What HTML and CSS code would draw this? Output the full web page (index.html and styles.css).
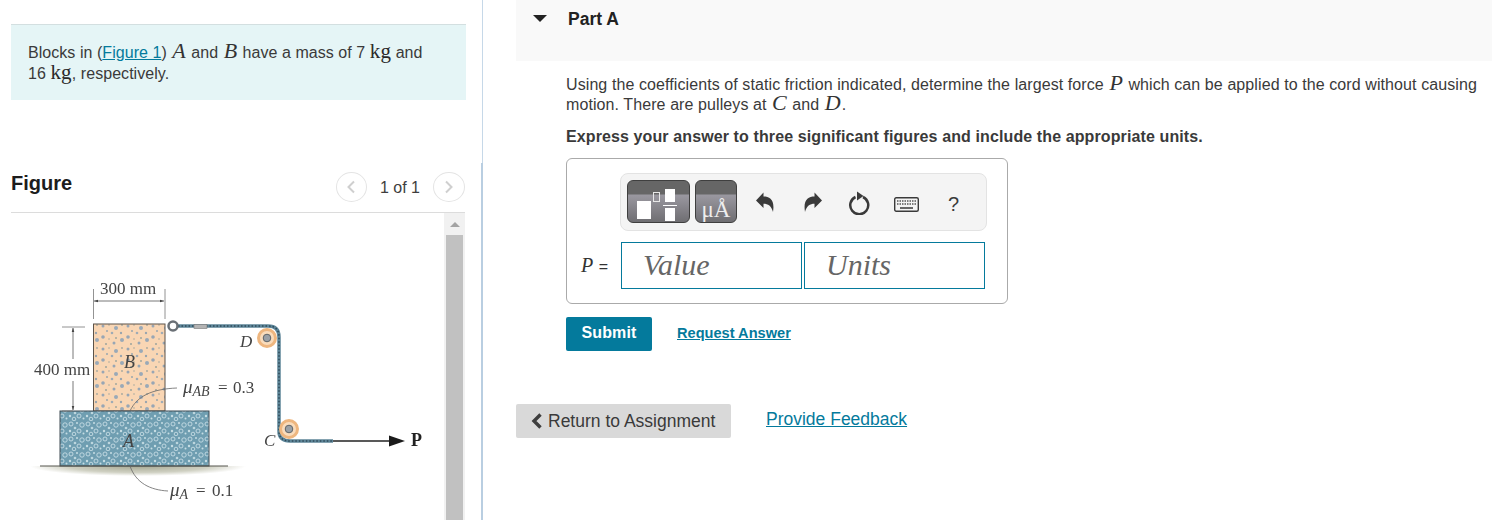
FILE: index.html
```html
<!DOCTYPE html>
<html lang="en">
<head>
<meta charset="utf-8">
<title>Part A</title>
<link rel="stylesheet" href="styles.css">
</head>
<body>
<div class="page">
  <aside class="left">
    <div class="intro">Blocks in (<a href="#">Figure 1</a>) <span class="mi">A</span> and <span class="mi">B</span> have a mass of 7 <span class="mu">kg</span> and<br>16 <span class="mu">kg</span>, respectively.</div>
    <div class="figure-head">
      <h2 class="figure-title">Figure</h2>
      <div class="pager">
        <span class="pager-btn"><svg width="10" height="14" viewBox="0 0 10 14"><path d="M8 1.5 2.500 7 8 12.500" fill="none" stroke="#cfcfcf" stroke-width="2"/></svg></span>
        <span class="pager-text">1 of 1</span>
        <span class="pager-btn"><svg width="10" height="14" viewBox="0 0 10 14"><path d="M2 1.5 7.500 7 2 12.500" fill="none" stroke="#cfcfcf" stroke-width="2"/></svg></span>
      </div>
    </div>
    <div class="figure-body">
      <svg class="diagram" width="433" height="308" viewBox="11 212 433 308">
        <defs>
          <pattern id="dotsB" width="25" height="23" patternUnits="userSpaceOnUse">
            <circle cx="3" cy="3" r="1.500" fill="#98a6b4"/>
            <circle cx="9" cy="2" r=".8" fill="#a3a79e"/>
            <circle cx="16" cy="5" r="2" fill="#9aa9b7"/>
            <circle cx="22" cy="2" r=".9" fill="#a3a79e"/>
            <circle cx="7" cy="8" r="1" fill="#9aa5ae"/>
            <circle cx="12" cy="10" r="1.300" fill="#9fabb5"/>
            <circle cx="21" cy="10" r="1.200" fill="#9aa5ae"/>
            <circle cx="3" cy="14" r="1.800" fill="#98a6b4"/>
            <circle cx="9" cy="16" r=".8" fill="#a3a79e"/>
            <circle cx="16" cy="15" r="1" fill="#a3a79e"/>
            <circle cx="22" cy="17" r="2" fill="#9aa9b7"/>
            <circle cx="6" cy="21" r="1.100" fill="#a3a79e"/>
            <circle cx="14" cy="20" r="1.500" fill="#98a6b4"/>
          </pattern>
          <pattern id="dotsA" width="17" height="15" patternUnits="userSpaceOnUse">
            <circle cx="3" cy="3" r="2" fill="none" stroke="#c6dde4" stroke-width=".9"/>
            <circle cx="9" cy="2" r="1" fill="#c6dde4"/>
            <circle cx="14" cy="4" r="2.200" fill="none" stroke="#c6dde4" stroke-width=".9"/>
            <circle cx="7" cy="7" r="1.300" fill="#bcd6de"/>
            <circle cx="2" cy="10" r="1.200" fill="#c6dde4"/>
            <circle cx="11" cy="10" r="2" fill="none" stroke="#c6dde4" stroke-width=".9"/>
            <circle cx="6" cy="13" r="1.800" fill="none" stroke="#c6dde4" stroke-width=".9"/>
            <circle cx="15.500" cy="12.500" r="1" fill="#c6dde4"/>
          </pattern>
          <radialGradient id="shade" cx=".5" cy="0" r=".5" gradientTransform="translate(0 0)">
            <stop offset="0" stop-color="#a6a892"/>
            <stop offset=".65" stop-color="#cfd0c2"/>
            <stop offset="1" stop-color="#fff"/>
          </radialGradient>
          <marker id="tip" markerWidth="6" markerHeight="6" refX="5.500" refY="2.500" orient="auto-start-reverse">
            <path d="M0 .8 6 2.500 0 4.200z" fill="#444"/>
          </marker>
        </defs>
        <rect x="30" y="465" width="216" height="20" fill="url(#shade)"/>
        <rect x="93.500" y="323" width="71.500" height="87" fill="#f9d6b4"/>
        <rect x="93.500" y="323" width="71.500" height="87" fill="url(#dotsB)" stroke="#5d5348" stroke-width="1"/>
        <rect x="60" y="410" width="149" height="55" fill="#6f9eb1"/>
        <rect x="60" y="410" width="149" height="55" fill="url(#dotsA)" stroke="#3f4b52" stroke-width="1"/>
        <path d="M40 465H228" stroke="#55554d" stroke-width="1"/>
        <path d="M93.500 288V318M165 288V318M62 326H85M62 410H73" stroke="#777" stroke-width=".8" fill="none"/>
        <path d="M94 300H164" stroke="#555" stroke-width=".8" marker-start="url(#tip)" marker-end="url(#tip)"/>
        <path d="M73 327V358" stroke="#555" stroke-width=".8" marker-start="url(#tip)"/>
        <path d="M73 380V409" stroke="#555" stroke-width=".8" marker-end="url(#tip)"/>
        <path d="M130 410C137 395 152 388 177 387M130 465C136 482 150 489 168 490" fill="none" stroke="#666" stroke-width=".8"/>
        <path d="M178 325H268Q279 325 279 336V430Q279 440 290 440H333" fill="none" stroke="#5d8598" stroke-width="3.500"/>
        <path d="M178 325H268Q279 325 279 336V430Q279 440 290 440H333" fill="none" stroke="#2f4a58" stroke-width="1.500" stroke-dasharray="1.500 2"/>
        <circle cx="173" cy="325" r="4.500" fill="#fff" stroke="#6a7076" stroke-width="2.500"/>
        <rect x="194" y="323.500" width="13" height="4" fill="#b4b4b4" stroke="#777" stroke-width=".6"/>
        <circle cx="267" cy="337" r="8.500" fill="#f9dcbc" stroke="#eeb67f" stroke-width="3"/>
        <circle cx="267" cy="337" r="3.800" fill="#9aa0a6" stroke="#5f6468" stroke-width="1"/>
        <circle cx="289" cy="428" r="8.500" fill="#f9dcbc" stroke="#eeb67f" stroke-width="3"/>
        <circle cx="289" cy="428" r="3.800" fill="#9aa0a6" stroke="#5f6468" stroke-width="1"/>
        <path d="M333 440H392" stroke="#222" stroke-width="1.600"/>
        <path d="M389 434.500 405 440 389 445.500z" fill="#1b1b1b"/>
        <g class="fig-text">
          <text x="100" y="293">300 mm</text>
          <text x="34" y="374">400 mm</text>
          <text class="it big" x="124" y="367">B</text>
          <text class="it big" x="123" y="446">A</text>
          <text class="it" x="240" y="346">D</text>
          <text class="it" x="264" y="445">C</text>
          <text x="183" y="392"><tspan class="it mug">μ</tspan><tspan class="it sub" dy="3">AB</tspan><tspan x="218" dy="-3">=</tspan><tspan x="233">0.3</tspan></text>
          <text x="170" y="495"><tspan class="it mug">μ</tspan><tspan class="it sub" dy="3">A</tspan><tspan x="196" dy="-3">=</tspan><tspan x="212">0.1</tspan></text>
          <text class="bold" x="411" y="445">P</text>
        </g>
      </svg>
      <div class="scrollbar">
        <div class="scroll-up"><span class="scroll-arrow"></span></div>
        <div class="scroll-thumb"></div>
      </div>
    </div>
  </aside>
  <main class="right">
    <div class="part-head">
      <span class="caret"></span>
      <h3 class="part-title">Part A</h3>
    </div>
    <div class="part-body">
      <p class="question">Using the coefficients of static friction indicated, determine the largest force <span class="mi">P</span> which can be applied to the cord without causing motion. There are pulleys at <span class="mi">C</span> and <span class="mi">D</span>.</p>
      <p class="instruction">Express your answer to three significant figures and include the appropriate units.</p>
      <div class="answer-box">
        <div class="toolbar">
          <div class="tpl tpl-wide">
            <span class="sq sq-base"></span>
            <span class="sq sq-exp"></span>
            <span class="frac"><span class="sq sq-num"></span><span class="frac-line"></span><span class="sq sq-num"></span></span>
          </div>
          <div class="tpl tpl-narrow"><span class="units-glyph">μÅ</span></div>
          <div class="tool-icons">
            <svg class="tool" width="18" height="20" viewBox="0 0 18 20"><path d="M0 8.500 7.500 .5V4.500C14 4.500 19 8 17 20 15.500 14 12 11.800 7.500 11.800V16z" fill="#3a3a3a"/></svg>
            <svg class="tool" width="18" height="20" viewBox="0 0 18 20"><path d="M18 8.500 10.500 .5V4.500C4 4.500-1 8 1 20 2.500 14 6 11.800 10.500 11.800V16z" fill="#3a3a3a"/></svg>
            <svg class="tool" width="24" height="24" viewBox="0 0 24 24"><path d="M8.500 6A9 9 0 1 0 16 6" fill="none" stroke="#3a3a3a" stroke-width="2.500"/><path d="M10 .5 16.500 5 10 9.500z" fill="#3a3a3a"/></svg>
            <svg class="tool" width="25" height="15" viewBox="0 0 25 15"><rect x=".7" y=".7" width="23.600" height="13.600" rx="1.500" fill="#f4f4f4" stroke="#3a3a3a" stroke-width="1.400"/><path d="M3 4H22M3 7H22" stroke="#555" stroke-width="1.500" stroke-dasharray="1.500 1"/><path d="M6 11H19" stroke="#444" stroke-width="1.600"/></svg>
            <span class="help">?</span>
          </div>
        </div>
        <div class="answer-row">
          <span class="var"><i>P</i> =</span>
          <div class="field">Value</div>
          <div class="field">Units</div>
        </div>
      </div>
      <div class="actions">
        <button class="submit" type="button">Submit</button>
        <a class="request" href="#">Request Answer</a>
      </div>
    </div>
    <div class="footer">
      <button class="return" type="button"><svg width="12" height="18" viewBox="0 0 12 18"><path d="M9.500 2.500 3 9l6.500 6.500" fill="none" stroke="#3e3e3e" stroke-width="3.400"/></svg>Return to Assignment</button>
      <a class="feedback" href="#">Provide Feedback</a>
    </div>
  </main>
</div>
</body>
</html>
```
FILE: styles.css
```css
* { box-sizing: border-box; }
html, body { margin: 0; padding: 0; background: #fff; }
body { font-family: "Liberation Sans", Arial, sans-serif; font-size: 16px; color: #3a3a3a; overflow: hidden; }
a { color: #047a9c; }
.page { display: flex; width: 1500px; height: 520px; overflow: hidden; }

.left {
  width: 483px; flex: none; padding: 24px 0 0 11px;
  background:
    linear-gradient(#c6d8e8, #c6d8e8) right top / 1px 163px no-repeat,
    linear-gradient(#b9cee1, #b9cee1) right bottom / 2px 357px no-repeat;
}
.intro { width: 455px; height: 76px; padding: 17px 17px 0; background: #e5f5f6; border-top: 1px solid #d3dfe0; line-height: 21px; letter-spacing: .05px; }
.mi { display: inline-block; padding: 0 1px; font-family: "Liberation Serif", serif; font-style: italic; font-size: 22px; line-height: 16px; letter-spacing: 0; color: #333; }
.mu { display: inline-block; font-family: "Liberation Serif", serif; font-size: 21px; line-height: 16px; letter-spacing: .2px; color: #2a2a2a; }

.figure-head { width: 454px; height: 41px; margin-top: 71px; display: flex; justify-content: space-between; align-items: flex-start; }
.figure-title { margin: 0; font-size: 20px; line-height: 22px; padding-top: 1px; color: #1c1c1c; }
.pager { display: flex; align-items: flex-start; padding-top: 1px; }
.pager-btn { width: 32px; height: 30px; border: 1px solid #e4e4e4; border-radius: 50%; display: flex; align-items: center; justify-content: center; }
.pager-btn:first-child { width: 31px; }
.pager-text { padding: 7px 13px 0 13px; line-height: 18px; color: #3e3e3e; }
.figure-body { width: 454px; height: 400px; border-top: 1px solid #dcdcdc; display: flex; overflow: hidden; }
.diagram { flex: none; display: block; filter: blur(.35px); }
.fig-text text { font-family: "Liberation Serif", serif; font-size: 17px; fill: #444; }
.fig-text .it { font-style: italic; }
.fig-text .big { font-size: 18px; }
.fig-text .mug { font-size: 19px; }
.fig-text .sub { font-size: 14px; }
.fig-text .bold { font-weight: bold; font-size: 18px; fill: #222; }
.scrollbar { width: 21px; background: #f1f1f1; padding: 0 2px; }
.scroll-up { height: 22px; display: flex; align-items: center; justify-content: center; }
.scroll-arrow { width: 0; height: 0; border-left: 5px solid transparent; border-right: 5px solid transparent; border-bottom: 5px solid #a3a3a3; }
.scroll-thumb { height: 400px; background: #c1c1c1; }

.right { flex: none; width: 976px; margin-left: 33px; }
.part-head { height: 61px; background: #f9f9f9; display: flex; align-items: flex-start; padding: 10px 0 0 17px; }
.caret { width: 0; height: 0; margin-top: 5px; border-left: 7px solid transparent; border-right: 7px solid transparent; border-top: 7px solid #222; }
.part-title { margin: 0 0 0 21px; font-size: 17.5px; line-height: 19px; color: #222; }
.part-body { padding-left: 50px; }
.question { margin: 14px 0 0; line-height: 20px; width: 926px; letter-spacing: .09px; }
.instruction { margin: 12px 0 0; font-weight: bold; line-height: 20px; letter-spacing: .11px; }
.answer-box { width: 442px; height: 146px; margin-top: 11px; border: 1px solid #aaa; border-radius: 6px; padding: 14px 20px 0 14px; }
.toolbar { width: 367px; height: 58px; margin-left: 39px; display: flex; align-items: flex-start; padding: 6px 0 0 6px; background: #f4f4f4; border: 1px solid #e3e3e3; border-radius: 8px; }
.tpl { height: 43px; border: 1px solid #3f3f3f; border-radius: 6px; background: linear-gradient(#666 0, #666 13px, #9a98a0 14px, #6f6e72 100%); display: flex; }
.tpl-wide { width: 63px; margin-right: 5px; align-items: flex-start; padding-left: 9px; }
.tpl-narrow { width: 42px; justify-content: center; align-items: flex-end; }
.sq { display: block; background: #fff; }
.sq-base { width: 14px; height: 18px; margin-top: 20px; }
.sq-exp { width: 7px; height: 10px; margin: 11px 0 0 2px; background: none; border: 1px solid #e8e8e8; }
.frac { margin: 8px 0 0 3px; width: 14px; display: flex; flex-direction: column; align-items: center; }
.sq-num { width: 10px; height: 13px; }
.frac-line { width: 14px; height: 1px; background: #fff; margin: 3px 0 2px; }
.units-glyph { font-family: "Liberation Serif", serif; font-size: 23px; line-height: 24px; color: #eee; }
.tool-icons { display: flex; align-items: center; height: 43px; padding-left: 19px; }
.tool { display: block; flex: none; }
.tool:nth-child(1) { margin-right: 30px; }
.tool:nth-child(2) { margin-right: 25px; }
.tool:nth-child(3) { margin-top: 2px; margin-right: 23px; }
.tool:nth-child(4) { margin-top: 5px; }
.help { margin-left: 29px; padding-top: 5px; font-size: 20px; color: #3a3a3a; }
.answer-row { display: flex; align-items: center; margin-top: 11px; }
.var { width: 40px; font-size: 16px; word-spacing: 1px; color: #333; }
.var i { font-family: "Liberation Serif", serif; font-size: 20px; }
.field { width: 181px; height: 47px; margin-right: 2px; padding: 3px 0 0 21px; border: 1px solid #047a9c; font-family: "Liberation Serif", serif; font-style: italic; font-size: 30px; line-height: 38px; color: #666; }
.actions { display: flex; align-items: center; margin-top: 13px; }
.submit { width: 86px; height: 34px; padding: 0 0 2px; border: 0; border-radius: 2px; background: #047a9c; color: #fff; font: bold 16px "Liberation Sans", sans-serif; letter-spacing: .1px; }
.request { margin-left: 25px; padding-bottom: 2px; font-size: 14.6px; font-weight: bold; }
.footer { display: flex; align-items: flex-start; margin-top: 53px; }
.return { width: 215px; height: 34px; padding: 0 0 0 15px; border: 0; border-radius: 2px; background: #d9d9d9; color: #3a3a3a; font: 17.5px "Liberation Sans", sans-serif; display: flex; align-items: center; gap: 5px; text-align: left; }
.feedback { margin-left: 35px; font-size: 17.5px; line-height: 30px; }
```
